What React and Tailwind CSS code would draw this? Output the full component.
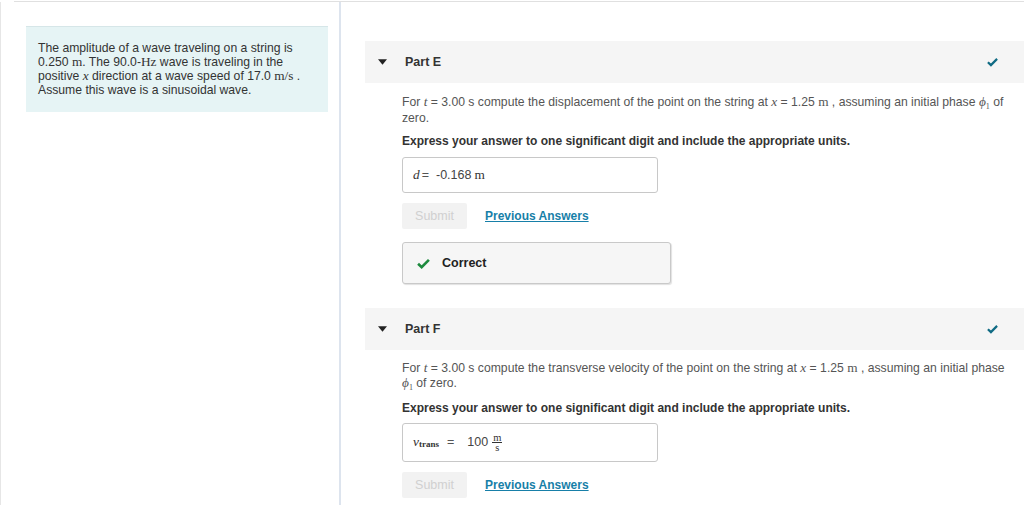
const serif = "font-['Liberation_Serif',serif]";

function M({ children, italic }) {
  return <span className={`${serif} text-[13.3px] leading-none ${italic ? "italic" : ""}`}>{children}</span>;
}

function Phi() {
  return (
    <span className={`${serif} text-[13.3px] leading-none italic`}>
      ϕ<span className="relative top-[3px] text-[8px] not-italic">1</span>
    </span>
  );
}

function Check({ className = "" }) {
  return (
    <svg viewBox="0 0 12 10" className={className}>
      <path d="M1 5.2 L4.3 8.4 L11 1.6" fill="none" stroke="currentColor" strokeWidth="2.4" />
    </svg>
  );
}

function PartHeader({ label }) {
  return (
    <div className="h-[42px] bg-[#f5f5f5] flex items-center pl-[13px] pr-[26px]">
      <svg viewBox="0 0 10 6" className="w-[9px] h-[6px] text-[#222]">
        <path d="M0 0 H10 L5 6 Z" fill="currentColor" />
      </svg>
      <span className="ml-[18px] text-[12.5px] font-bold text-[#333]">{label}</span>
      <Check className="ml-auto w-[11px] h-[10px] text-[#106b84]" />
    </div>
  );
}

function SubmitRow() {
  return (
    <div className="flex items-center gap-[18px]">
      <div className="w-[65px] h-[26px] bg-[#f2f2f2] rounded-[2px] flex items-center justify-center text-[12.5px] text-[#d0d0d0]">
        Submit
      </div>
      <a className="text-[12px] font-bold text-[#177fa8] underline">Previous Answers</a>
    </div>
  );
}

export default function App() {
  return (
    <div className="w-[1024px] h-[505px] overflow-hidden bg-white font-['Liberation_Sans',Arial,sans-serif] text-[#333]">
      <div className="flex h-full">
        {/* left strip */}
        <div className="w-[14px] border-l border-[#e6e6e6] mt-[2px]" />
        <div className="flex-1 flex flex-col mt-px border-t border-[#e0e0e0]">
          <div className="flex flex-1">
            {/* Problem statement */}
            <div className="w-[327px] border-r-2 border-[#dde4ee] pl-[12px] pt-[24px]">
              <div className="w-[302px] h-[86px] bg-[#e6f4f5] border-t border-[#d6e6e8] px-[12px] pt-[14px] text-[12.2px] leading-[14px] text-[#333]">
                The amplitude of a wave traveling on a string is <br />
                0.250 <M>m</M>. The 90.0-<M>Hz</M> wave is traveling in the <br />
                positive <M italic>x</M> direction at a wave speed of 17.0 <M>m/s</M> . <br />
                Assume this wave is a sinusoidal wave.
              </div>
            </div>

            {/* Parts */}
            <div className="flex-1 pl-[24px] pt-[39px]">
              <PartHeader label="Part E" />
              <div className="pl-[37px] pr-[12px] pt-[11px]">
                <p className="text-[12.2px] leading-[16px] text-[#555]">
                  For <M italic>t</M> = 3.00 s compute the displacement of the point on the string at <M italic>x</M> = 1.25 <M>m</M> , assuming an initial phase <Phi /> of zero.
                </p>
                <p className="mt-[6px] text-[12px] font-bold text-[#333]">
                  Express your answer to one significant digit and include the appropriate units.
                </p>
                <div className="mt-[7px] w-[256px] h-[36px] border border-[#c8c8c8] rounded-[3px] flex items-center pl-[10px] text-[12.5px]">
                  <M italic>d</M>
                  <span className="ml-[2px] text-[#555]">=</span>
                  <span className="ml-[7px] text-[#444]">-0.168</span>
                  <span className="ml-[3px]"><M>m</M></span>
                </div>
                <div className="mt-[10px]">
                  <SubmitRow />
                </div>
                <div className="mt-[13px] w-[269px] h-[42px] bg-[#f6f6f6] border border-[#c9c9c9] rounded-[3px] shadow-[1px_1px_1px_rgba(0,0,0,0.12)] flex items-center pl-[14px]">
                  <Check className="w-[13px] h-[11px] text-[#1d8a3e]" />
                  <span className="ml-[12px] text-[12.5px] font-bold text-[#222]">Correct</span>
                </div>
              </div>

              <div className="mt-[24px]">
                <PartHeader label="Part F" />
              </div>
              <div className="pl-[37px] pr-[8px] pt-[11px]">
                <p className="text-[12.2px] leading-[15px] text-[#555]">
                  For <M italic>t</M> = 3.00 s compute the transverse velocity of the point on the string at <M italic>x</M> = 1.25 <M>m</M> , assuming an initial phase <Phi /> of zero.
                </p>
                <p className="mt-[8px] text-[12px] font-bold text-[#333]">
                  Express your answer to one significant digit and include the appropriate units.
                </p>
                <div className="mt-[6px] w-[256px] h-[39px] border border-[#c8c8c8] rounded-[3px] flex items-center pl-[10px] text-[12.5px]">
                  <span className={`${serif} italic text-[13.5px]`}>v</span>
                  <span className={`${serif} font-bold text-[9px] mt-[5px]`}>trans</span>
                  <span className="ml-[8px] text-[#555]">=</span>
                  <span className="ml-[13px] text-[#444]">100</span>
                  <span className={`${serif} ml-[4px] inline-flex flex-col items-center text-[10.5px] leading-[9px]`}>
                    <span className="border-b border-[#333] px-px">m</span>
                    <span>s</span>
                  </span>
                </div>
                <div className="mt-[10px]">
                  <SubmitRow />
                </div>
              </div>
            </div>
          </div>
        </div>
      </div>
    </div>
  );
}
